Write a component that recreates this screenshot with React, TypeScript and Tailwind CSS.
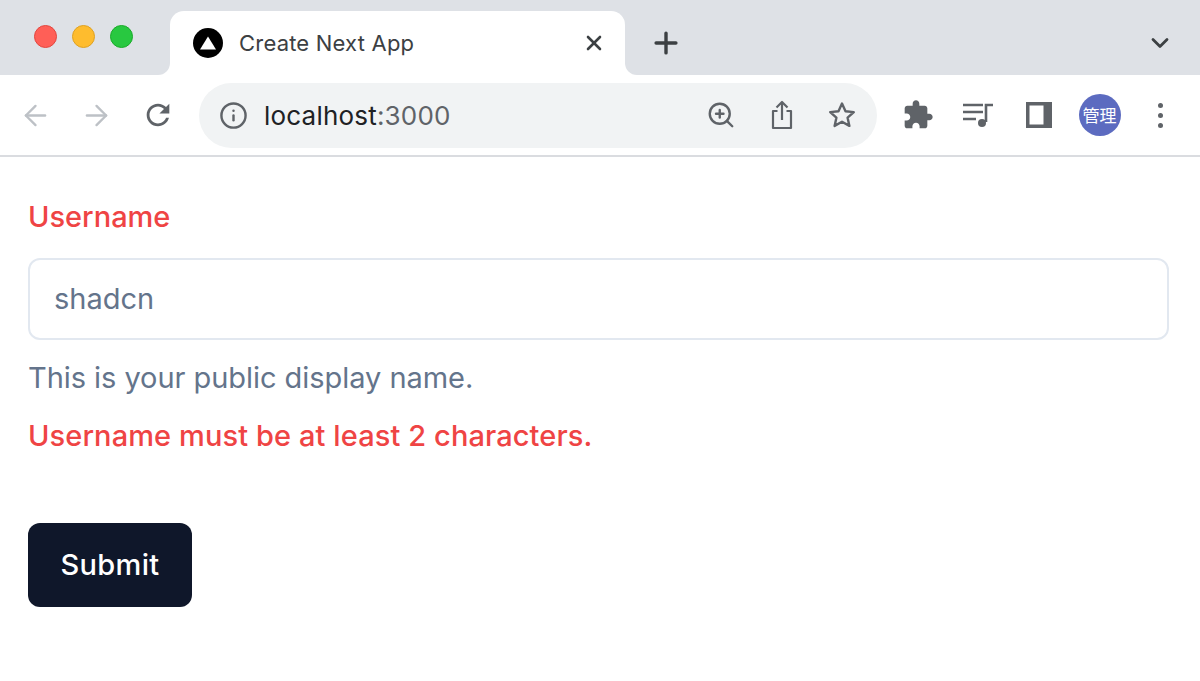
import { X, Plus, ChevronDown, ArrowLeft, ArrowRight, Info, ZoomIn } from 'lucide-react';

const ToolIcon = ({ children }: { children: React.ReactNode }) => (
  <div className="flex h-[60px] w-[61px] shrink-0 items-center justify-center">{children}</div>
);

const Favicon = () => (
  <svg width="30" height="30" viewBox="0 0 30 30">
    <circle cx="15" cy="15" r="15" fill="#000" />
    <path d="M15 8.5L23 21.5H7Z" fill="#fff" />
  </svg>
);

const BrowserChrome = () => (
  <div className="bg-white">
    <div className="flex h-[75px]">
      <div className="flex w-[170px] shrink-0 items-start gap-[15px] rounded-br-[12px] bg-[#dee1e6] pl-[34px] pt-[25px]">
        <span className="h-[23px] w-[23px] rounded-full border border-[#e2463f] bg-[#ff5f57]" />
        <span className="h-[23px] w-[23px] rounded-full border border-[#dea123] bg-[#febc2e]" />
        <span className="h-[23px] w-[23px] rounded-full border border-[#1aab29] bg-[#28c840]" />
      </div>
      <div className="w-[455px] shrink-0 bg-[#dee1e6] pt-[11px]">
        <div className="flex h-[64px] items-center rounded-t-[14px] bg-white pb-[1px] pl-[23px] pr-[19px]">
          <Favicon />
          <span className="ml-[16px] flex-1 pt-[2px] text-[22px] tracking-[0.2px] text-[#3c4043]">Create Next App</span>
          <X size={24} strokeWidth={2.6} color="#3c4043" />
        </div>
      </div>
      <div className="flex flex-1 items-center rounded-bl-[12px] bg-[#dee1e6] pl-[24px] pr-[26px] pt-[11px]">
        <Plus size={34} strokeWidth={2.4} color="#3c4043" />
        <ChevronDown size={28} strokeWidth={2.4} color="#3c4043" className="ml-auto" />
      </div>
    </div>
    <div className="flex h-[82px] items-center border-b-[2px] border-[#dadce0] pl-[5px]">
      <ToolIcon><ArrowLeft size={33} strokeWidth={1.7} color="#bdc1c6" /></ToolIcon>
      <ToolIcon><ArrowRight size={33} strokeWidth={1.7} color="#bdc1c6" /></ToolIcon>
      <ToolIcon>
        <svg width="34" height="34" viewBox="0 0 24 24" fill="#5f6368">
          <path d="M17.65 6.35C16.2 4.9 14.21 4 12 4c-4.42 0-7.99 3.58-7.99 8s3.57 8 7.99 8c3.73 0 6.84-2.55 7.73-6h-2.08c-.82 2.33-3.04 4-5.65 4-3.31 0-6-2.69-6-6s2.69-6 6-6c1.66 0 3.14.69 4.22 1.78L13 11h7V4l-2.35 2.35z" />
        </svg>
      </ToolIcon>
      <div className="ml-[11px] flex h-[65px] w-[678px] shrink-0 items-center rounded-full bg-[#f1f3f4] pl-[20px] pr-[5px]">
        <Info size={29} strokeWidth={2} color="#5f6368" />
        <span className="ml-[16px] flex-1 text-[26px] tracking-[0.2px] text-[#202124]">
          localhost<span className="text-[#5f6368]">:3000</span>
        </span>
        <div className="flex translate-x-px">
          <ToolIcon><ZoomIn size={30} strokeWidth={1.9} color="#5f6368" /></ToolIcon>
          <ToolIcon>
            <svg width="30" height="32" viewBox="0 0 30 32" fill="none" stroke="#5f6368" strokeWidth="2.2" strokeLinejoin="round">
              <path d="M10.5 12H6v17h18V12h-4.5" />
              <path d="M15 21V3M9.5 8.5L15 3l5.5 5.5" />
            </svg>
          </ToolIcon>
        </div>
        <ToolIcon>
          <svg width="30" height="30" viewBox="0 0 30 30" fill="none" stroke="#5f6368" strokeWidth="2.4" strokeLinejoin="round">
            <path d="M15 3.5l3.5 7.7 8.3.9-6.2 5.6 1.8 8.2-7.4-4.2-7.4 4.2 1.8-8.2-6.2-5.6 8.3-.9z" />
          </svg>
        </ToolIcon>
      </div>
      <div className="ml-[9px] flex items-center">
        <ToolIcon>
          <svg width="32" height="32" viewBox="0 0 24 24" fill="#5f6368" className="translate-x-px">
            <path d="M20.5 11H19V7c0-1.1-.9-2-2-2h-4V3.5C13 2.12 11.88 1 10.5 1S8 2.12 8 3.5V5H4c-1.1 0-1.99.9-1.99 2v3.8H3.5c1.49 0 2.7 1.21 2.7 2.7s-1.21 2.7-2.7 2.7H2V20c0 1.1.9 2 2 2h3.8v-1.5c0-1.49 1.21-2.7 2.7-2.7 1.49 0 2.7 1.21 2.7 2.7V22H17c1.1 0 2-.9 2-2v-4h1.5c1.38 0 2.5-1.12 2.5-2.5S21.88 11 20.5 11z" />
          </svg>
        </ToolIcon>
        <ToolIcon>
          <svg width="32" height="26" viewBox="0 0 32 26" fill="none" stroke="#5f6368" strokeWidth="2.6">
            <path d="M1 3h20M1 10h20M1 17h13" />
            <path d="M24 20V3h7" />
            <circle cx="20" cy="21" r="4" fill="#5f6368" stroke="none" />
          </svg>
        </ToolIcon>
        <ToolIcon>
          <svg width="26" height="26" viewBox="0 0 26 26" fill="#5f6368">
            <path fillRule="evenodd" d="M0 0h26v26H0zM3.5 3.5v19H17.5v-19z" />
          </svg>
        </ToolIcon>
        <ToolIcon>
          <div className="flex h-[42px] w-[42px] items-center justify-center rounded-full bg-[#5c6bc0] font-['Noto_Sans_CJK_JP',sans-serif] text-[17px] text-white">
            管理
          </div>
        </ToolIcon>
        <ToolIcon>
          <div className="flex flex-col gap-[5px]">
            <span className="h-[5px] w-[5px] rounded-full bg-[#5f6368]" />
            <span className="h-[5px] w-[5px] rounded-full bg-[#5f6368]" />
            <span className="h-[5px] w-[5px] rounded-full bg-[#5f6368]" />
          </div>
        </ToolIcon>
      </div>
    </div>
  </div>
);

export default function App() {
  return (
    <div className="h-[681px] overflow-hidden bg-white font-['Inter',sans-serif]">
      <BrowserChrome />
      <form className="pl-[28px] pr-[31px] pt-[40px]" onSubmit={(e) => e.preventDefault()}>
        <label className="block text-[29px] font-medium leading-[40px] text-[#ef4444]">Username</label>
        <input
          className="mt-[21px] block h-[82px] w-full rounded-[12px] border-[2px] border-[#e2e8f0] px-[24px] pb-[2px] text-[29px] text-[#64748b] outline-none"
          defaultValue="shadcn"
        />
        <p className="mt-[18px] text-[29px] leading-[40px] tracking-[-0.05px] text-[#64748b]">This is your public display name.</p>
        <p className="mt-[18px] text-[29px] font-medium leading-[40px] tracking-[0.1px] text-[#ef4444]">Username must be at least 2 characters.</p>
        <button className="mt-[67px] block h-[84px] w-[164px] rounded-[12px] bg-[#0f172a] text-[29px] font-medium tracking-[0.3px] text-white">
          Submit
        </button>
      </form>
    </div>
  );
}
